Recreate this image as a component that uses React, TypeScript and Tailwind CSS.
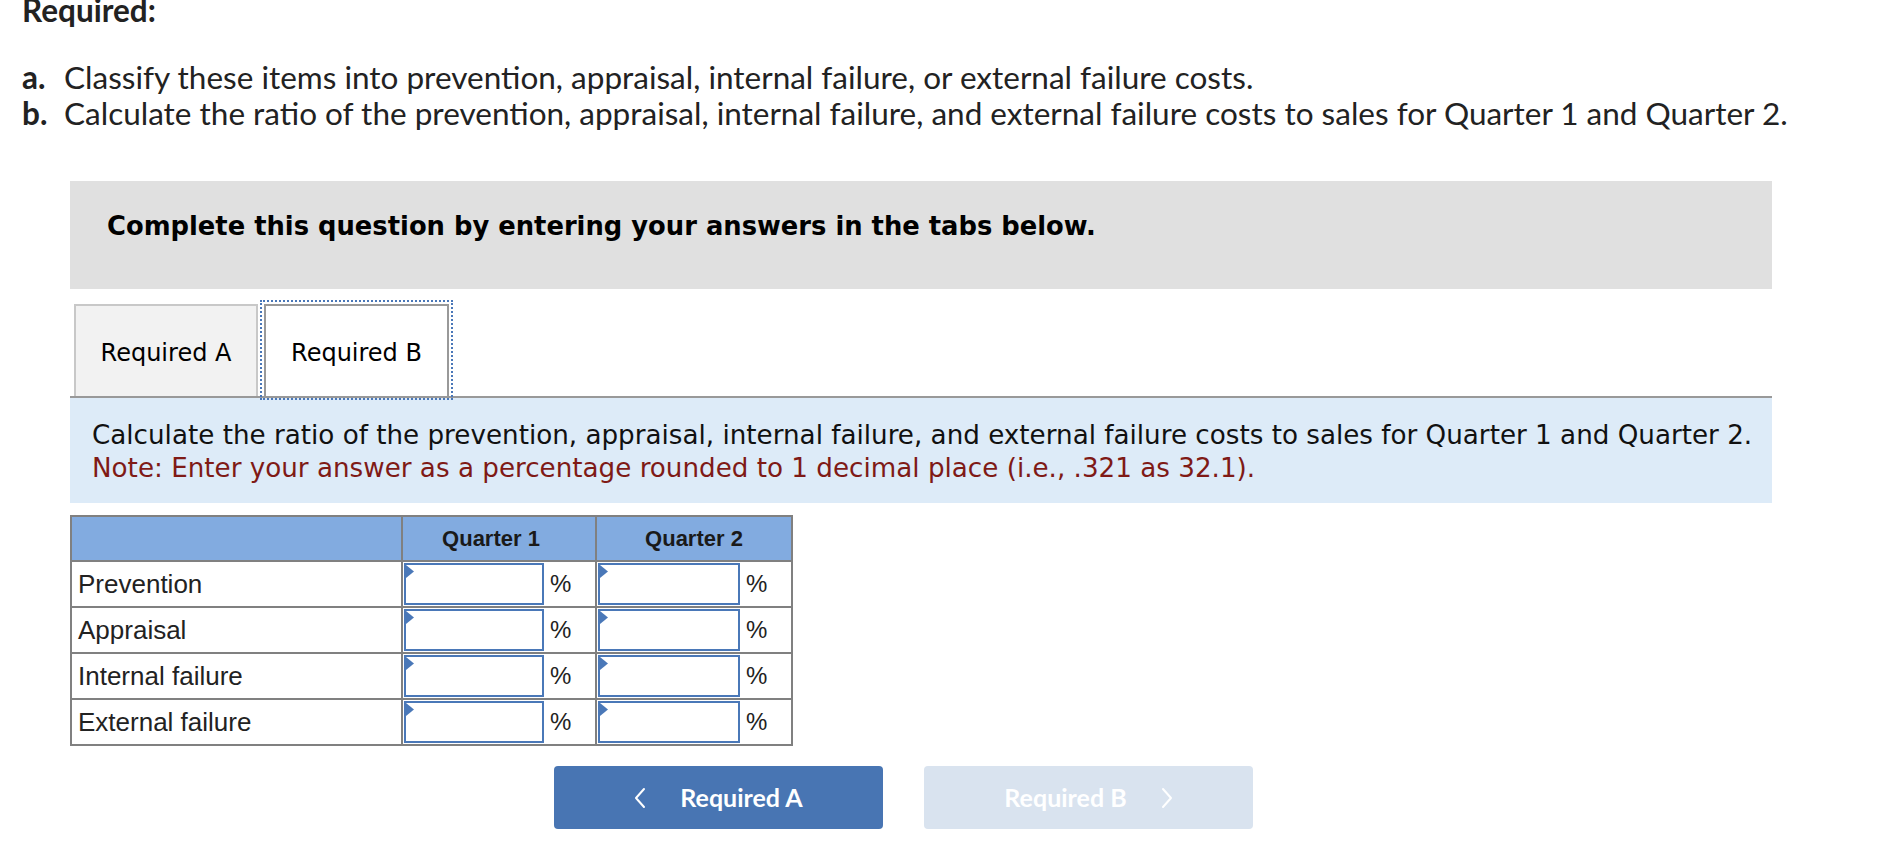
import React from "react";

const rows = ["Prevention", "Appraisal", "Internal failure", "External failure"];

function Marker() {
  return (
    <svg className="absolute left-0 top-0" width="8" height="13" viewBox="0 0 8 13">
      <polygon points="0,0 8,6.5 0,13" fill="#4a78b8" />
    </svg>
  );
}

function InputCell({ w }: { w: string }) {
  return (
    <div className="flex h-full items-center">
      <div className={`relative ${w} ml-[1px] h-[42px] border-2 border-[#4a78b8] bg-white`}>
        <Marker />
      </div>
      <div className="flex-1 pl-[6px] text-[24px] text-[#222]">%</div>
    </div>
  );
}

function Chevron({ dir }: { dir: "left" | "right" }) {
  return (
    <svg width="12" height="22" viewBox="0 0 12 22" fill="none">
      {dir === "left" ? (
        <polyline points="10,2 2,11 10,20" stroke="white" strokeWidth="2" strokeLinecap="round" strokeLinejoin="round" />
      ) : (
        <polyline points="2,2 10,11 2,20" stroke="white" strokeWidth="2" strokeLinecap="round" strokeLinejoin="round" />
      )}
    </svg>
  );
}

export default function App() {
  return (
    <div className="w-[1902px] h-[860px] overflow-hidden bg-white relative">
      {/* Top instructions */}
      <div className="pl-[22px] font-['Lato',sans-serif] text-[#222]">
        <div className="text-[31.5px] leading-[32px] font-bold -mt-[6px]">Required:</div>
        <div className="mt-[33px] text-[31.5px] leading-[36px]">
          <div className="flex">
            <span className="w-[42px] font-bold">a.</span>
            <span>Classify these items into prevention, appraisal, internal failure, or external failure costs.</span>
          </div>
          <div className="flex whitespace-nowrap">
            <span className="w-[42px] font-bold">b.</span>
            <span>
              Calculate the ratio of the prevention, appraisal, internal failure, and external failure costs to sales for Quarter 1 and Quarter 2.
            </span>
          </div>
        </div>
      </div>

      {/* Gray banner */}
      <div className="ml-[70px] mt-[50px] w-[1702px] h-[108px] bg-[#e0e0e0] pl-[37px] pt-[30px]">
        <div className="font-['DejaVu_Sans',sans-serif] font-bold text-[25.8px] leading-[30px] text-black">
          Complete this question by entering your answers in the tabs below.
        </div>
      </div>

      {/* Tabs */}
      <div className="ml-[70px] w-[1702px] mt-[15px] flex items-end border-b-2 border-[#999] font-['DejaVu_Sans',sans-serif] text-[24px] text-black">
        <div className="ml-[4px] w-[184px] h-[92px] pt-[4px] bg-[#f2f2f2] border-2 border-b-0 border-[#c8c8c8] flex items-center justify-center">
          Required A
        </div>
        <div className="ml-[6px] w-[185px] h-[92px] pt-[4px] bg-white border-2 border-b-0 border-[#999] flex items-center justify-center outline-2 outline-dotted outline-[#4a77b8] outline-offset-[2px]">
          Required B
        </div>
      </div>

      {/* Info box */}
      <div className="ml-[70px] w-[1702px] h-[105px] bg-[#ddebf8] pl-[22px] pt-[21px] font-['DejaVu_Sans',sans-serif] text-[26.2px] leading-[33px] whitespace-nowrap">
        <div className="text-[#111]">
          Calculate the ratio of the prevention, appraisal, internal failure, and external failure costs to sales for Quarter 1 and Quarter 2.
        </div>
        <div className="text-[#7f1a16]">
          Note: Enter your answer as a percentage rounded to 1 decimal place (i.e., .321 as 32.1).
        </div>
      </div>

      {/* Table */}
      <div className="ml-[70px] mt-[12px] w-[723px] border-2 border-[#808080] font-['Liberation_Sans',Arial,sans-serif]">
        <div className="flex h-[45px] border-b-2 border-[#808080] bg-[#82abe0]">
          <div className="w-[331px] border-r-2 border-[#808080]" />
          <div className="w-[194px] border-r-2 border-[#808080] flex items-center justify-center pr-[16px] text-[22px] font-bold text-[#1a1a1a]">
            Quarter 1
          </div>
          <div className="flex-1 flex items-center justify-center text-[22px] font-bold text-[#1a1a1a]">
            Quarter 2
          </div>
        </div>
        {rows.map((r, i) => (
          <div
            key={r}
            className={`flex ${i < rows.length - 1 ? "h-[46px] border-b-2" : "h-[44px]"} border-[#808080]`}
          >
            <div className="w-[331px] border-r-2 border-[#808080] flex items-center pl-[6px] text-[26px] text-[#222]">
              {r}
            </div>
            <div className="w-[194px] border-r-2 border-[#808080]">
              <InputCell w="w-[140px]" />
            </div>
            <div className="flex-1">
              <InputCell w="w-[142px]" />
            </div>
          </div>
        ))}
      </div>

      {/* Nav buttons */}
      <div className="ml-[554px] mt-[20px] flex gap-[41px] font-['Lato',sans-serif] font-bold text-[25px] text-white">
        <div className="w-[329px] h-[63px] rounded-[4px] bg-[#4875b3] flex items-center justify-center gap-[34px]">
          <Chevron dir="left" />
          <span>Required A</span>
        </div>
        <div className="w-[329px] h-[63px] rounded-[4px] bg-[#d9e3ef] flex items-center justify-center gap-[34px]">
          <span>Required B</span>
          <Chevron dir="right" />
        </div>
      </div>
    </div>
  );
}
